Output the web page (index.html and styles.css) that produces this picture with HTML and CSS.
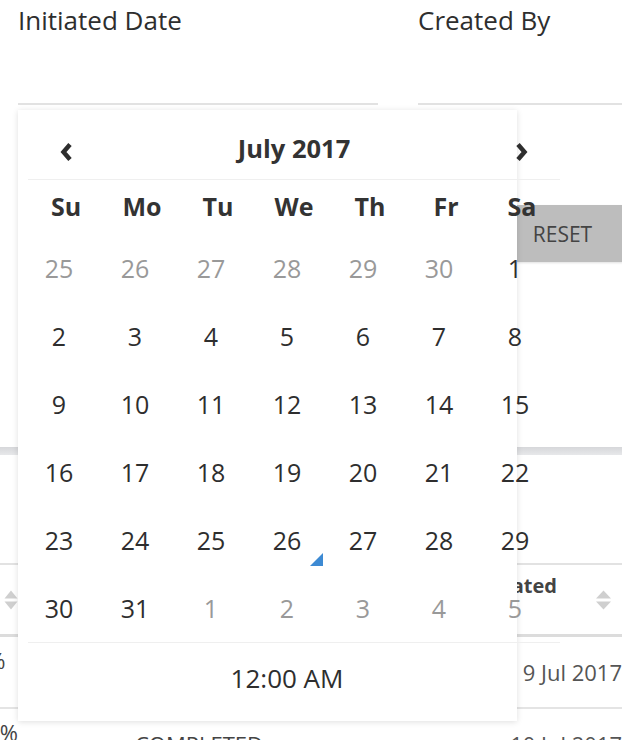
FILE: index.html
```html
<!DOCTYPE html>
<html lang="en">
<head>
  <meta charset="UTF-8" />
  <meta name="viewport" content="width=device-width, initial-scale=1.0" />
  <title>Jobs</title>
  <link rel="stylesheet" href="styles.css">
</head>
<body>

  <main class="page">
    <section class="filters">
      <div class="field">
        <label class="field__label">Initiated Date</label>
        <div class="field__input"></div>
      </div>
      <div class="field">
        <label class="field__label">Created By</label>
        <div class="field__input"></div>
      </div>
    </section>

    <div class="actions">
      <button class="button button--reset">RESET</button>
    </div>

    <div class="divider"></div>

    <div class="results">
      <div class="results__row results__row--head">
        <div class="cell cell--progress">
          <span class="cell__title">Progress</span>
          <svg class="sort" viewBox="0 0 14 22" width="14" height="22"><path d="M7 1.5 L13.5 9.5 H0.5 Z M0.5 12.5 H13.5 L7 20.5 Z" /></svg>
        </div>
        <div class="cell cell--status"><span class="cell__title">Status</span></div>
        <div class="cell cell--date">
          <span class="cell__title">Created</span>
          <svg class="sort" viewBox="0 0 17 22" width="17" height="22"><path d="M8.5 1.5 L16 9.5 H1 Z M1 12.5 H16 L8.5 20.5 Z" /></svg>
        </div>
      </div>
      <div class="results__row">
        <div class="cell cell--progress">50%</div>
        <div class="cell cell--status">COMPLETED</div>
        <div class="cell cell--date">9 Jul 2017</div>
      </div>
      <div class="results__row">
        <div class="cell cell--progress">100%</div>
        <div class="cell cell--status">COMPLETED</div>
        <div class="cell cell--date">10 Jul 2017</div>
      </div>
    </div>

    <!-- popup of the Initiated Date field -->
    <div class="datepicker">
      <div class="datepicker__inner">
        <div class="datepicker__head">
          <button class="datepicker__nav">
            <svg viewBox="0 0 14 20" width="14" height="20"><polyline points="11,2.5 4.5,10 11,17.5" /></svg>
          </button>
          <div class="datepicker__title">July 2017</div>
          <button class="datepicker__nav">
            <svg viewBox="0 0 14 20" width="14" height="20"><polyline points="3,2.5 9.5,10 3,17.5" /></svg>
          </button>
        </div>

        <div class="datepicker__grid">
          <span class="dow">Su</span>
          <span class="dow">Mo</span>
          <span class="dow">Tu</span>
          <span class="dow">We</span>
          <span class="dow">Th</span>
          <span class="dow">Fr</span>
          <span class="dow">Sa</span>

          <span class="day day--muted">25</span>
          <span class="day day--muted">26</span>
          <span class="day day--muted">27</span>
          <span class="day day--muted">28</span>
          <span class="day day--muted">29</span>
          <span class="day day--muted">30</span>
          <span class="day">1</span>

          <span class="day">2</span>
          <span class="day">3</span>
          <span class="day">4</span>
          <span class="day">5</span>
          <span class="day">6</span>
          <span class="day">7</span>
          <span class="day">8</span>

          <span class="day">9</span>
          <span class="day">10</span>
          <span class="day">11</span>
          <span class="day">12</span>
          <span class="day">13</span>
          <span class="day">14</span>
          <span class="day">15</span>

          <span class="day">16</span>
          <span class="day">17</span>
          <span class="day">18</span>
          <span class="day">19</span>
          <span class="day">20</span>
          <span class="day">21</span>
          <span class="day">22</span>

          <span class="day">23</span>
          <span class="day">24</span>
          <span class="day">25</span>
          <span class="day day--today">26</span>
          <span class="day">27</span>
          <span class="day">28</span>
          <span class="day">29</span>

          <span class="day">30</span>
          <span class="day">31</span>
          <span class="day day--muted">1</span>
          <span class="day day--muted">2</span>
          <span class="day day--muted">3</span>
          <span class="day day--muted">4</span>
          <span class="day day--muted">5</span>
        </div>

        <div class="datepicker__time">12:00 AM</div>
      </div>
    </div>
  </main>

</body>
</html>
```

FILE: styles.css
```css
* {
  margin: 0;
  padding: 0;
  box-sizing: border-box;
}

html,
body {
  overflow: hidden;
}

body {
  font-family: "Open Sans", "Liberation Sans", sans-serif;
  color: #333;
  background-color: #fff;
  min-height: 100vh;
}

.page {
  position: relative;
}

/* filters */

.filters {
  display: grid;
  grid-template-columns: 360px 1fr;
  gap: 40px;
  padding: 2px 0 0 18px;
}

.field__label {
  display: block;
  font-size: 26px;
  line-height: 36px;
  color: #2e2e2e;
}

.field__input {
  height: 67px;
  border-bottom: 2px solid #e2e2e2;
}

.actions {
  display: flex;
  justify-content: flex-end;
  margin-top: 100px;
  margin-right: -1px;
}

.button {
  border: none;
  font-family: inherit;
  cursor: pointer;
}

.button--reset {
  width: 121px;
  height: 57px;
  font-size: 21px;
  color: #444;
  background-color: #bdbdbd;
  box-shadow: 0 1px 2px rgba(0,0,0,0.12);
}

.divider {
  height: 8px;
  margin-top: 185px;
  background: linear-gradient(#d6d7da, #e7e8ea);
}

/* table */

.results {
  width: 678px;
  margin-top: 108px;
  margin-left: -38px;
  border-top: 2px solid #e2e2e2;
  font-size: 22px;
  color: #555;
}

.results__row {
  display: grid;
  grid-template-columns: 60px 495px 123px;
  height: 72px;
  border-bottom: 2px solid #e4e4e4;
}

.results__row--head {
  height: 72px;
  border-bottom: 3px solid #dcdcdc;
}

.cell {
  display: flex;
  align-items: center;
  line-height: 30px;
  white-space: nowrap;
}

.cell__title {
  font-size: 20px;
  font-weight: 700;
  color: #444;
  padding-bottom: 28px;
}

.sort {
  flex: none;
  fill: #cfcfcf;
}

.cell--progress {
  align-items: flex-start;
  padding-top: 8px;
  color: #444;
}

.results__row--head .cell--progress {
  align-items: center;
  justify-content: flex-end;
  gap: 48px;
  padding: 0 4px 0 0;
}

.cell--status {
  padding-left: 113px;
  color: #444;
}

.cell--date {
  justify-content: flex-end;
  padding-right: 18px;
}

.results__row--head .cell--date {
  gap: 38px;
  padding-right: 28px;
}

/* datepicker popup */

.datepicker {
  position: absolute;
  top: 110px;
  left: 18px;
  width: 499px;
  height: 611px;
  padding: 10px 0 0 10px;
  background-color: #fff;
  box-shadow: 0 1px 6px rgba(0,0,0,0.13);
}

.datepicker__inner {
  width: 532px;
}

.datepicker__head {
  display: grid;
  grid-template-columns: 76px 380px 76px;
  align-items: center;
  height: 60px;
  border-bottom: 1px solid #efefef;
}

.datepicker__nav {
  display: flex;
  justify-content: center;
  align-items: center;
  background: none;
  border: none;
  padding-top: 5px;
}

.datepicker__nav svg {
  fill: none;
  stroke: #2e2e2e;
  stroke-width: 4.5;
  stroke-linejoin: miter;
}

.datepicker__title {
  text-align: center;
  font-size: 25.5px;
  font-weight: 700;
  padding-bottom: 3px;
}

.datepicker__grid {
  display: grid;
  grid-template-columns: repeat(7, 76px);
  grid-template-rows: 54px repeat(6, 68px);
}

.dow,
.day {
  display: flex;
  justify-content: center;
  align-items: center;
  font-size: 25px;
}

.dow {
  font-weight: 700;
  padding-bottom: 2px;
}

.day {
  position: relative;
  padding-right: 14px;
  color: #2e2e2e;
}

.day--muted {
  color: #999;
}

.day--today::after {
  content: "";
  position: absolute;
  right: 9px;
  bottom: 8px;
  border-left: 13px solid transparent;
  border-bottom: 13px solid #3d8ad3;
}

.datepicker__time {
  display: flex;
  justify-content: center;
  align-items: center;
  height: 73px;
  padding: 0 14px 2px 0;
  border-top: 1px solid #efefef;
  font-size: 26px;
  color: #2e2e2e;
}
```
